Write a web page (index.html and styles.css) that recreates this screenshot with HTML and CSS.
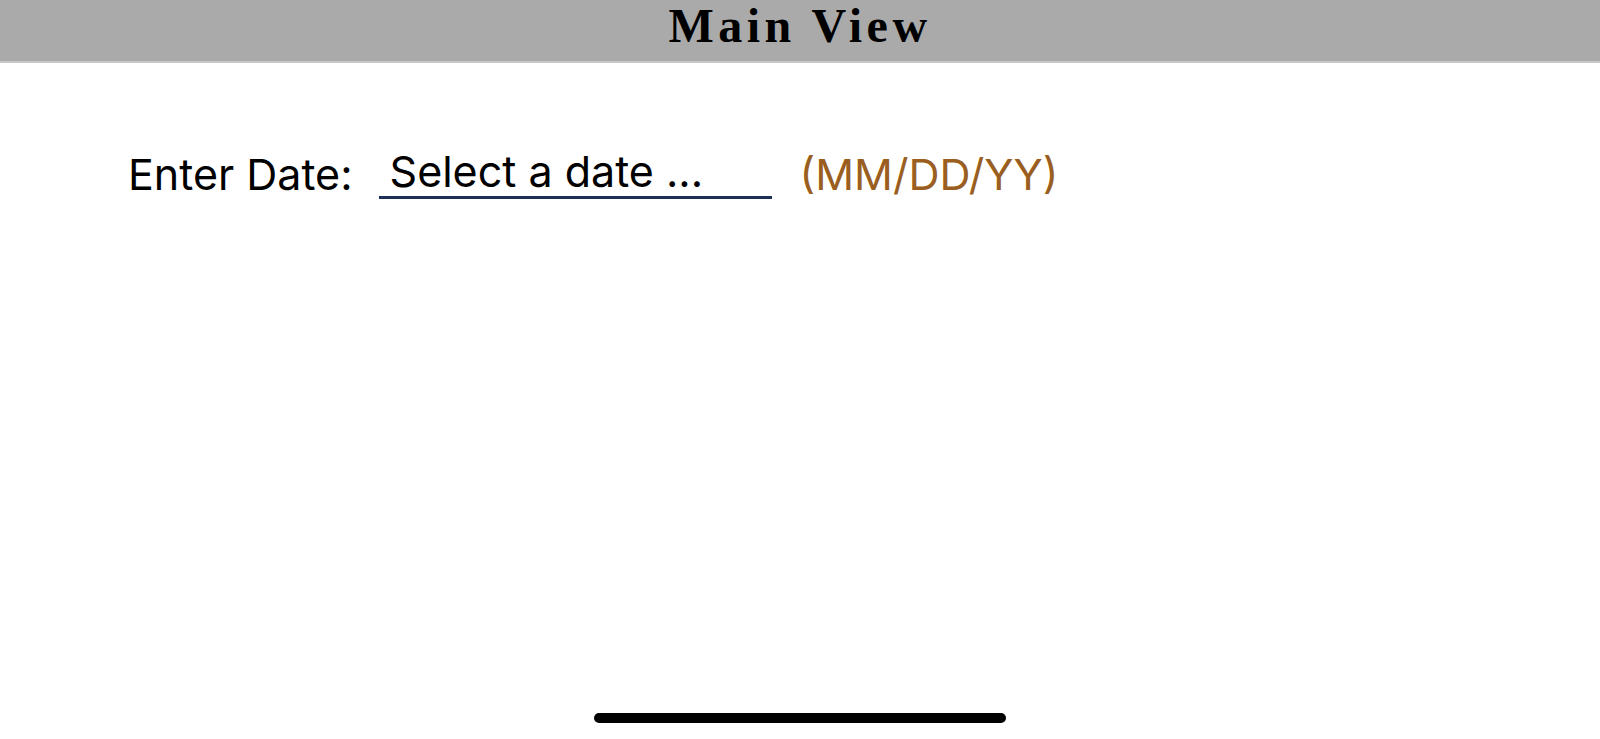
FILE: index.html
```html
<!DOCTYPE html>
<html>
<head>
<meta charset="utf-8">
<link rel="stylesheet" href="styles.css">
</head>
<body>
<div class="screen">
  <header class="nav">
    <h1 class="nav-title">Main View</h1>
  </header>
  <main class="content">
    <div class="date-row">
      <span class="label">Enter Date:</span>
      <div class="date-field"><span class="placeholder">Select a date ...</span></div>
      <span class="hint">(MM/DD/YY)</span>
    </div>
  </main>
  <div class="home-bar"><div class="home-indicator"></div></div>
</div>
</body>
</html>
```

FILE: styles.css
```css
html, body {
  margin: 0;
  padding: 0;
  background: #ffffff;
}
.screen {
  width: 1600px;
  height: 739px;
  display: flex;
  flex-direction: column;
  font-family: "Inter", "Liberation Sans", sans-serif;
  color: #000;
}
.nav {
  height: 61px;
  background: #aaaaaa;
  border-bottom: 2px solid #c8c8c8;
  display: flex;
  justify-content: center;
  align-items: flex-start;
}
.nav-title {
  margin: 0;
  font-family: "Liberation Serif", serif;
  font-weight: bold;
  font-size: 48px;
  letter-spacing: 4.5px;
  line-height: 52px;
}
.content {
  flex: 1;
  padding: 83px 0 0 128px;
}
.date-row {
  display: flex;
  align-items: flex-end;
}
.label {
  font-size: 43px;
  line-height: 50px;
}
.date-field {
  margin-left: 26px;
  width: 393px;
  padding-left: 11px;
  box-sizing: border-box;
  border-bottom: 3px solid #1d3057;
  font-size: 43px;
  line-height: 50px;
}
.hint {
  margin-left: 28px;
  font-size: 43px;
  line-height: 50px;
  color: #9a5f20;
}
.home-bar {
  height: 26px;
  display: flex;
  justify-content: center;
}
.home-indicator {
  width: 412px;
  height: 10px;
  background: #000;
  border-radius: 5px;
}
```
